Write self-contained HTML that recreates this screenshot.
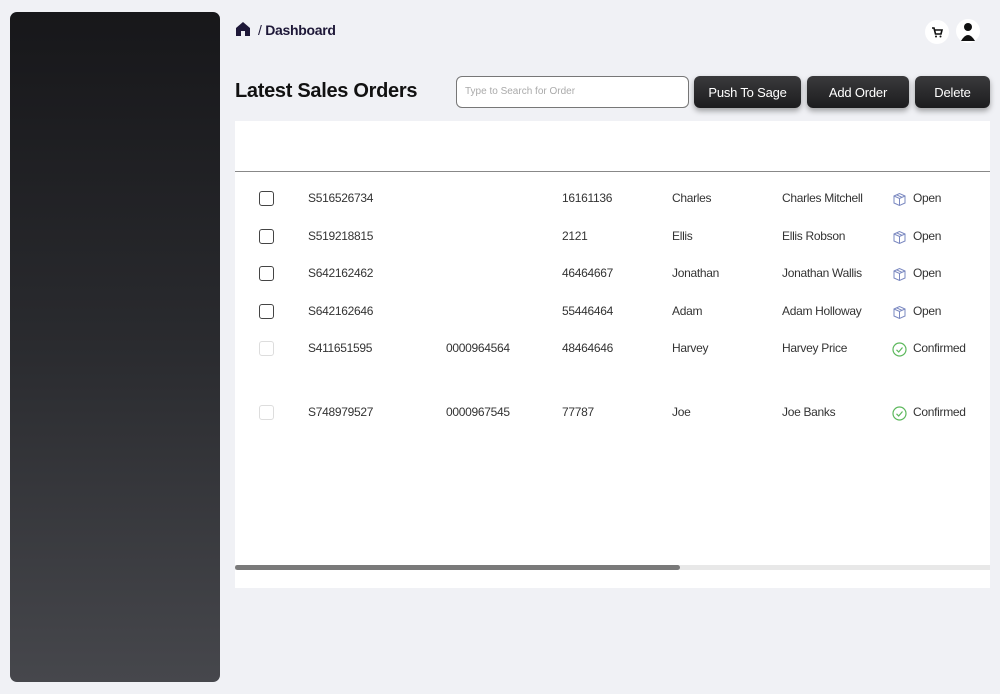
<!DOCTYPE html><html><head><meta charset="utf-8"><style>
*{box-sizing:border-box;margin:0;padding:0}
body{width:1000px;height:694px;background:#f0f1f5;font-family:"Liberation Sans",sans-serif;position:relative;overflow:hidden;color:#222}
.side{position:absolute;left:10px;top:12px;width:210px;height:670px;border-radius:7px;background:linear-gradient(180deg,#17171a 0%,#2a2b2f 50%,#46474c 100%)}
.abs{position:absolute}
.btn{position:absolute;top:76px;height:32px;background:linear-gradient(#3a3a3c,#1c1c1e);color:#fff;border-radius:6px;font-size:13px;display:flex;align-items:center;justify-content:center;box-shadow:0 3px 6px rgba(0,0,0,.35);letter-spacing:-.2px}
.panel{position:absolute;left:235px;top:121px;width:755px;height:467px;background:#fff}
.row{position:absolute;left:0;font-size:12px;color:#333;height:20px;width:755px;letter-spacing:-.3px}
.row span{position:absolute;top:2px}
.row svg{position:absolute;left:657px;top:3px}
.cb{position:absolute;left:24px;top:2px;width:15px;height:15px;border:1.5px solid #444;border-radius:3px}
.cb.l{border-color:#ddd}
</style></head><body>
<div class="side"></div>
<svg class="abs" style="left:235px;top:21px" width="16" height="16" viewBox="0 0 16 16"><path d="M8 1 L15 7 V15 H10 V10 H6 V15 H1 V7 Z" fill="#1e1838"/></svg>
<div class="abs" style="left:258px;top:22px;font-size:14px;color:#1e1838;letter-spacing:-.3px">/ <b>Dashboard</b></div>
<div class="abs" style="left:925px;top:20px;width:24px;height:24px;border-radius:50%;background:#fff"><svg width="24" height="24" viewBox="0 0 24 24"><path d="M7 8 H9 L10.5 14 H16 L17 10 H10" fill="none" stroke="#111" stroke-width="1.6"/><circle cx="11" cy="16.5" r="1" fill="#111"/><circle cx="15.5" cy="16.5" r="1" fill="#111"/></svg></div>
<div class="abs" style="left:956px;top:19px;width:24px;height:24px;border-radius:50%;background:#fff"><svg width="24" height="24"><circle cx="12" cy="8" r="4" fill="#111"/><path d="M5 22 Q12 10 19 22Z" fill="#111"/></svg></div>
<div class="abs" style="left:235px;top:80px;font-size:20px;font-weight:bold;color:#111;letter-spacing:-.3px">Latest Sales Orders</div>
<div class="abs" style="left:456px;top:76px;width:233px;height:32px;border:1px solid #777;border-radius:6px;background:#fff;font-size:10px;color:#aaa;padding:9px 8px">Type to Search for Order</div>
<div class="btn" style="left:694px;width:107px">Push To Sage</div>
<div class="btn" style="left:807px;width:102px">Add Order</div>
<div class="btn" style="left:915px;width:75px">Delete</div>
<div class="panel">
<div class="abs" style="left:0;top:50px;width:755px;height:1px;background:#888"></div>
<div class="row" style="top:68px"><div class="cb"></div><span style="left:73px">S516526734</span><span style="left:327px">16161136</span><span style="left:437px">Charles</span><span style="left:547px">Charles Mitchell</span><svg width="15" height="15" viewBox="0 0 15 15"><path d="M2 4 L7.5 1.5 L13 4 L13 11 L7.5 13.5 L2 11 Z M2 4 L7.5 6.5 L13 4 M7.5 6.5 V13.5 M4.5 2.8 L10 5.3" fill="none" stroke="#7a88c0" stroke-width="1"/></svg><span style="left:678px">Open</span></div>
<div class="row" style="top:106px"><div class="cb"></div><span style="left:73px">S519218815</span><span style="left:327px">2121</span><span style="left:437px">Ellis</span><span style="left:547px">Ellis Robson</span><svg width="15" height="15" viewBox="0 0 15 15"><path d="M2 4 L7.5 1.5 L13 4 L13 11 L7.5 13.5 L2 11 Z M2 4 L7.5 6.5 L13 4 M7.5 6.5 V13.5 M4.5 2.8 L10 5.3" fill="none" stroke="#7a88c0" stroke-width="1"/></svg><span style="left:678px">Open</span></div>
<div class="row" style="top:143px"><div class="cb"></div><span style="left:73px">S642162462</span><span style="left:327px">46464667</span><span style="left:437px">Jonathan</span><span style="left:547px">Jonathan Wallis</span><svg width="15" height="15" viewBox="0 0 15 15"><path d="M2 4 L7.5 1.5 L13 4 L13 11 L7.5 13.5 L2 11 Z M2 4 L7.5 6.5 L13 4 M7.5 6.5 V13.5 M4.5 2.8 L10 5.3" fill="none" stroke="#7a88c0" stroke-width="1"/></svg><span style="left:678px">Open</span></div>
<div class="row" style="top:181px"><div class="cb"></div><span style="left:73px">S642162646</span><span style="left:327px">55446464</span><span style="left:437px">Adam</span><span style="left:547px">Adam Holloway</span><svg width="15" height="15" viewBox="0 0 15 15"><path d="M2 4 L7.5 1.5 L13 4 L13 11 L7.5 13.5 L2 11 Z M2 4 L7.5 6.5 L13 4 M7.5 6.5 V13.5 M4.5 2.8 L10 5.3" fill="none" stroke="#7a88c0" stroke-width="1"/></svg><span style="left:678px">Open</span></div>
<div class="row" style="top:218px"><div class="cb l"></div><span style="left:73px">S411651595</span><span style="left:211px">0000964564</span><span style="left:327px">48464646</span><span style="left:437px">Harvey</span><span style="left:547px">Harvey Price</span><svg width="15" height="15" viewBox="0 0 15 15"><circle cx="7.5" cy="7.5" r="6.5" fill="none" stroke="#5cb85c" stroke-width="1.2"/><path d="M4.5 7.8 L6.7 10 L10.5 5.5" fill="none" stroke="#5cb85c" stroke-width="1.2"/></svg><span style="left:678px">Confirmed</span></div>
<div class="row" style="top:282px"><div class="cb l"></div><span style="left:73px">S748979527</span><span style="left:211px">0000967545</span><span style="left:327px">77787</span><span style="left:437px">Joe</span><span style="left:547px">Joe Banks</span><svg width="15" height="15" viewBox="0 0 15 15"><circle cx="7.5" cy="7.5" r="6.5" fill="none" stroke="#5cb85c" stroke-width="1.2"/><path d="M4.5 7.8 L6.7 10 L10.5 5.5" fill="none" stroke="#5cb85c" stroke-width="1.2"/></svg><span style="left:678px">Confirmed</span></div>
<div class="abs" style="left:0;top:444px;width:755px;height:5px;background:#e8e8e8"></div>
<div class="abs" style="left:0;top:444px;width:445px;height:5px;background:#7a7a7a;border-radius:3px"></div>
</div>
</body></html>
